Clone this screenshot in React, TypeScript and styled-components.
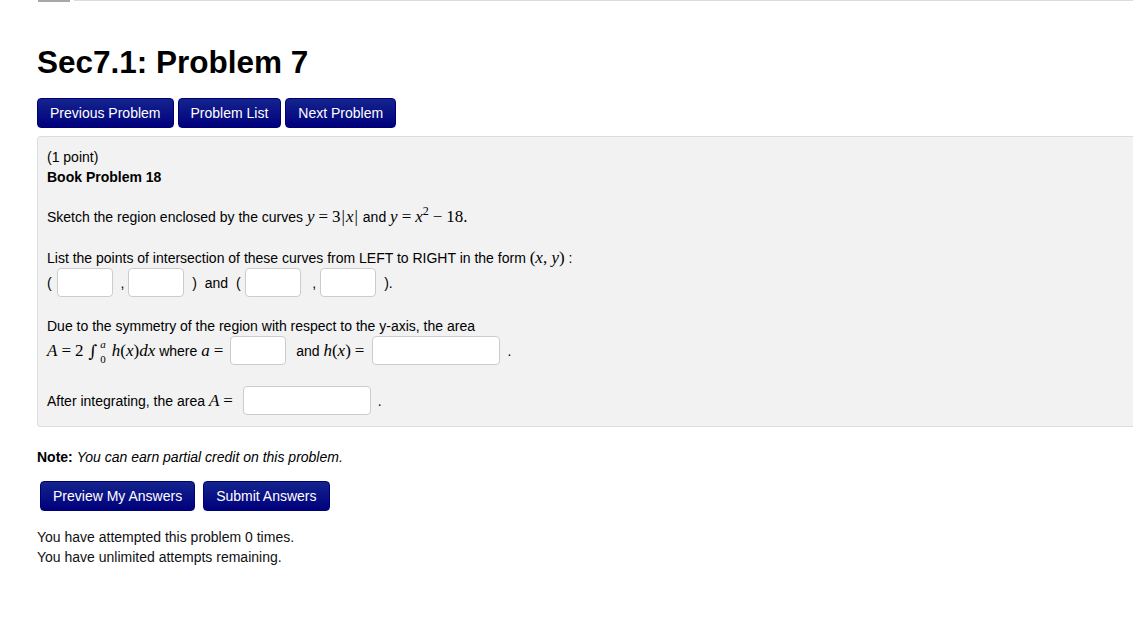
import React from "react";
import styled, { createGlobalStyle } from "styled-components";

const GlobalStyle = createGlobalStyle`
  html, body {
    margin: 0;
    padding: 0;
    background: #fff;
    overflow: hidden;
  }
  body {
    font-family: "Liberation Sans", Arial, Helvetica, sans-serif;
    font-size: 14px;
    color: #000;
  }
`;

const Page = styled.div`
  padding-left: 37px;
`;

const TopStrip = styled.div`
  display: flex;
  gap: 4px;
  height: 2px;
  margin-left: 38px;
`;

const TopTab = styled.div`
  width: 32px;
  background: #a8a8a8;
`;

const TopLine = styled.div`
  flex: 1;
  height: 1px;
  background: #dcdcdc;
`;

const Title = styled.h1`
  margin: 42px 0 0;
  font-size: 31.5px;
  line-height: 36px;
  font-weight: bold;
`;

const ButtonRow = styled.div<{ $gap: number; $indent?: number; $top: number }>`
  display: flex;
  gap: ${(p) => p.$gap}px;
  margin-top: ${(p) => p.$top}px;
  margin-left: ${(p) => p.$indent ?? 0}px;
`;

const Button = styled.button`
  height: 30px;
  padding: 0 12px;
  font-family: "Liberation Sans", Arial, Helvetica, sans-serif;
  font-size: 14px;
  color: #fff;
  background: linear-gradient(to bottom, #14248e, #00007c);
  border: 1px solid #000070;
  border-radius: 4px;
  cursor: pointer;
`;

const Panel = styled.div`
  margin-top: 8px;
  padding: 10px 9px 11px;
  background: #f2f2f2;
  border: 1px solid #dddddd;
  border-right: none;
  border-radius: 4px 0 0 4px;
`;

const Line = styled.div<{ $bold?: boolean; $gapTop?: number }>`
  line-height: 20px;
  font-weight: ${(p) => (p.$bold ? "bold" : "normal")};
  margin-top: ${(p) => p.$gapTop ?? 0}px;
  white-space: nowrap;
`;

const FieldRow = styled.div<{ $gapTop?: number }>`
  display: flex;
  align-items: center;
  height: 29px;
  line-height: 20px;
  margin-top: ${(p) => p.$gapTop ?? 0}px;
  white-space: pre;
`;

const Field = styled.input<{ $w: number; $left?: number; $right?: number }>`
  box-sizing: border-box;
  width: ${(p) => p.$w}px;
  height: 29px;
  margin: 0 ${(p) => p.$right ?? 4}px 0 ${(p) => p.$left ?? 4}px;
  padding: 0 6px;
  background: #fff;
  border: 1px solid #cccccc;
  border-radius: 4px;
  font-size: 13px;
  outline: none;
`;

const M = styled.span`
  font-family: "Liberation Serif", "Times New Roman", serif;
  font-size: 17px;
`;

const V = styled.i`
  font-family: "Liberation Serif", "Times New Roman", serif;
  font-style: italic;
`;

const Op = styled.span`
  margin: 0 4px;
`;

const Bar = styled.span`
  margin: 0 1px;
`;

const Sup = styled.sup`
  font-size: 12px;
  line-height: 0;
`;

const Integral = styled.span`
  display: inline-flex;
  align-items: center;
  margin: 0 6px 0 5px;
`;

const IntSign = styled.span`
  font-family: "DejaVu Serif", "Liberation Serif", serif;
  font-style: italic;
  font-size: 17px;
  line-height: 20px;
`;

const Limits = styled.span`
  display: inline-flex;
  flex-direction: column;
  justify-content: space-between;
  height: 27px;
  font-family: "Liberation Serif", "Times New Roman", serif;
  font-size: 11px;
  line-height: 12px;
  margin-left: 3px;
  margin-top: 2px;
`;

const Note = styled.div`
  margin-top: 20px;
  line-height: 20px;
`;

const Attempts = styled.div`
  margin-top: 16px;
  line-height: 20px;
  color: #111;
`;

const App: React.FC = () => (
  <>
    <GlobalStyle />
    <TopStrip>
      <TopTab />
      <TopLine />
    </TopStrip>
    <Page>
      <Title>Sec7.1: Problem 7</Title>
      <ButtonRow $gap={4} $top={18}>
        <Button>Previous Problem</Button>
        <Button>Problem List</Button>
        <Button>Next Problem</Button>
      </ButtonRow>

      <Panel>
        <Line>(1 point)</Line>
        <Line $bold>Book Problem 18</Line>
        <Line $gapTop={20}>
          Sketch the region enclosed by the curves{" "}
          <M>
            <V>y</V>
            <Op>=</Op>3<Bar>|</Bar>
            <V>x</V>
            <Bar>|</Bar>
          </M>{" "}
          and{" "}
          <M>
            <V>y</V>
            <Op>=</Op>
            <V>x</V>
            <Sup>2</Sup>
            <Op>−</Op>18.
          </M>
        </Line>
        <Line $gapTop={21}>
          List the points of intersection of these curves from LEFT to RIGHT in the form{" "}
          <M>
            (<V>x</V>, <V>y</V>)
          </M>{" "}
          :
        </Line>
        <FieldRow>
          {"("}
          <Field $w={56} $left={5} />
          {" ,"}
          <Field $w={56} />
          {" )  and  ("}
          <Field $w={56} />
          {"  ,"}
          <Field $w={56} />
          {" )."}
        </FieldRow>

        <Line $gapTop={19}>
          Due to the symmetry of the region with respect to the y-axis, the area
        </Line>
        <FieldRow>
          <M>
            <V>A</V>
            <Op>=</Op>2
          </M>
          <Integral>
            <IntSign>∫</IntSign>
            <Limits>
              <V>a</V>
              <span>0</span>
            </Limits>
          </Integral>
          <M>
            <V>h</V>(<V>x</V>)<V>dx</V>
          </M>
          {" where "}
          <M>
            <V>a</V>
            <Op>=</Op>
          </M>
          <Field $w={56} $left={3} $right={6} />
          {" and "}
          <M>
            <V>h</V>(<V>x</V>)<Op>=</Op>
          </M>
          <Field $w={128} $left={4} $right={7} />
          {"."}
        </FieldRow>

        <FieldRow $gapTop={21}>
          {"After integrating, the area "}
          <M>
            <V>A</V>
            <Op>=</Op>
          </M>
          <Field $w={128} $left={6} $right={7} />
          {"."}
        </FieldRow>
      </Panel>

      <Note>
        <b>Note:</b> <i>You can earn partial credit on this problem.</i>
      </Note>

      <ButtonRow $gap={8} $indent={3} $top={14}>
        <Button>Preview My Answers</Button>
        <Button>Submit Answers</Button>
      </ButtonRow>

      <Attempts>
        You have attempted this problem 0 times.
        <br />
        You have unlimited attempts remaining.
      </Attempts>
    </Page>
  </>
);

export default App;
